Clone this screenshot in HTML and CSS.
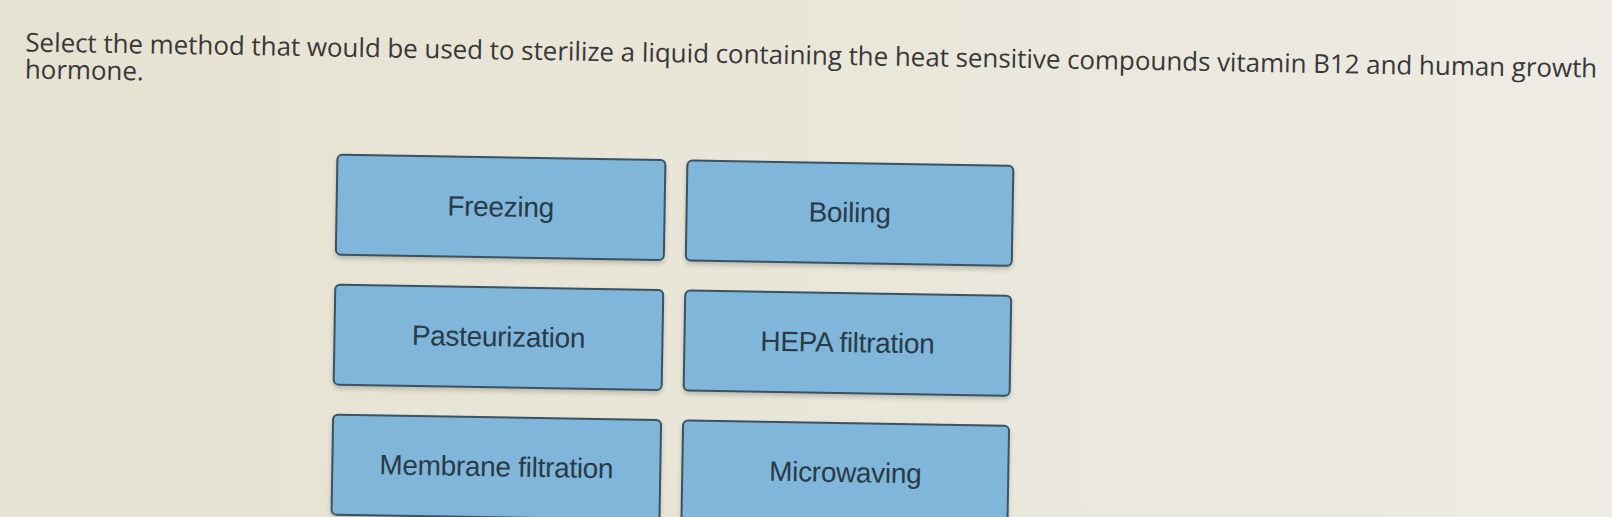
FILE: index.html
```html
<!DOCTYPE html>
<html lang="en">
<head>
    <meta charset="UTF-8">
    <meta name="viewport" content="width=device-width, initial-scale=1.0">
    <title>Sterilization Methods</title>
    <link rel="stylesheet" href="styles.css">
</head>
<body>

<main class="question">
    <!-- Enunciado -->
    <p class="prompt">Select the method that would be used to sterilize a liquid containing the heat sensitive compounds vitamin B12 and human growth hormone.</p>

    <!-- Opções de resposta -->
    <div class="choices">
        <button class="choice">Freezing</button>
        <button class="choice">Boiling</button>
        <button class="choice">Pasteurization</button>
        <button class="choice">HEPA filtration</button>
        <button class="choice">Membrane filtration</button>
        <button class="choice">Microwaving</button>
    </div>
</main>

</body>
</html>
```

FILE: styles.css
```css
/* Reset */
* {
    margin: 0;
    padding: 0;
    box-sizing: border-box;
}

:root {
    --color-text: #383838;
    --color-choice: #7fb6da;
    --color-choice-border: #3b5262;
    --color-choice-text: #2a3a46;
}

html, body {
    height: 100%;
    overflow: hidden;
}

body {
    background: linear-gradient(90deg, #e6e2d1 0%, #e9e7da 55%, #edebe3 100%);
    color: var(--color-text);
    font-family: 'Open Sans', 'Lato', sans-serif;
}

/* Página levemente inclinada */
.question {
    width: 1600px;
    padding: 28px 0 0 26px;
    transform: rotate(0.95deg);
    transform-origin: 0 0;
}

.prompt {
    width: 1574px;
    font-size: 26px;
    line-height: 27px;
    font-weight: 500;
    letter-spacing: -0.06px;
}

/* Grade de opções */
.choices {
    display: grid;
    grid-template-columns: 330px 328px;
    column-gap: 20px;
    row-gap: 28px;
    margin: 66px 0 0 313px;
}

.choice {
    height: 102px;
    background-color: var(--color-choice);
    border: 2px solid var(--color-choice-border);
    border-radius: 6px;
    box-shadow: 0 3px 4px rgba(60, 60, 40, 0.25);
    color: var(--color-choice-text);
    font-family: 'Liberation Sans', Arial, sans-serif;
    font-size: 28px;
    letter-spacing: -0.3px;
    cursor: pointer;
}
```
